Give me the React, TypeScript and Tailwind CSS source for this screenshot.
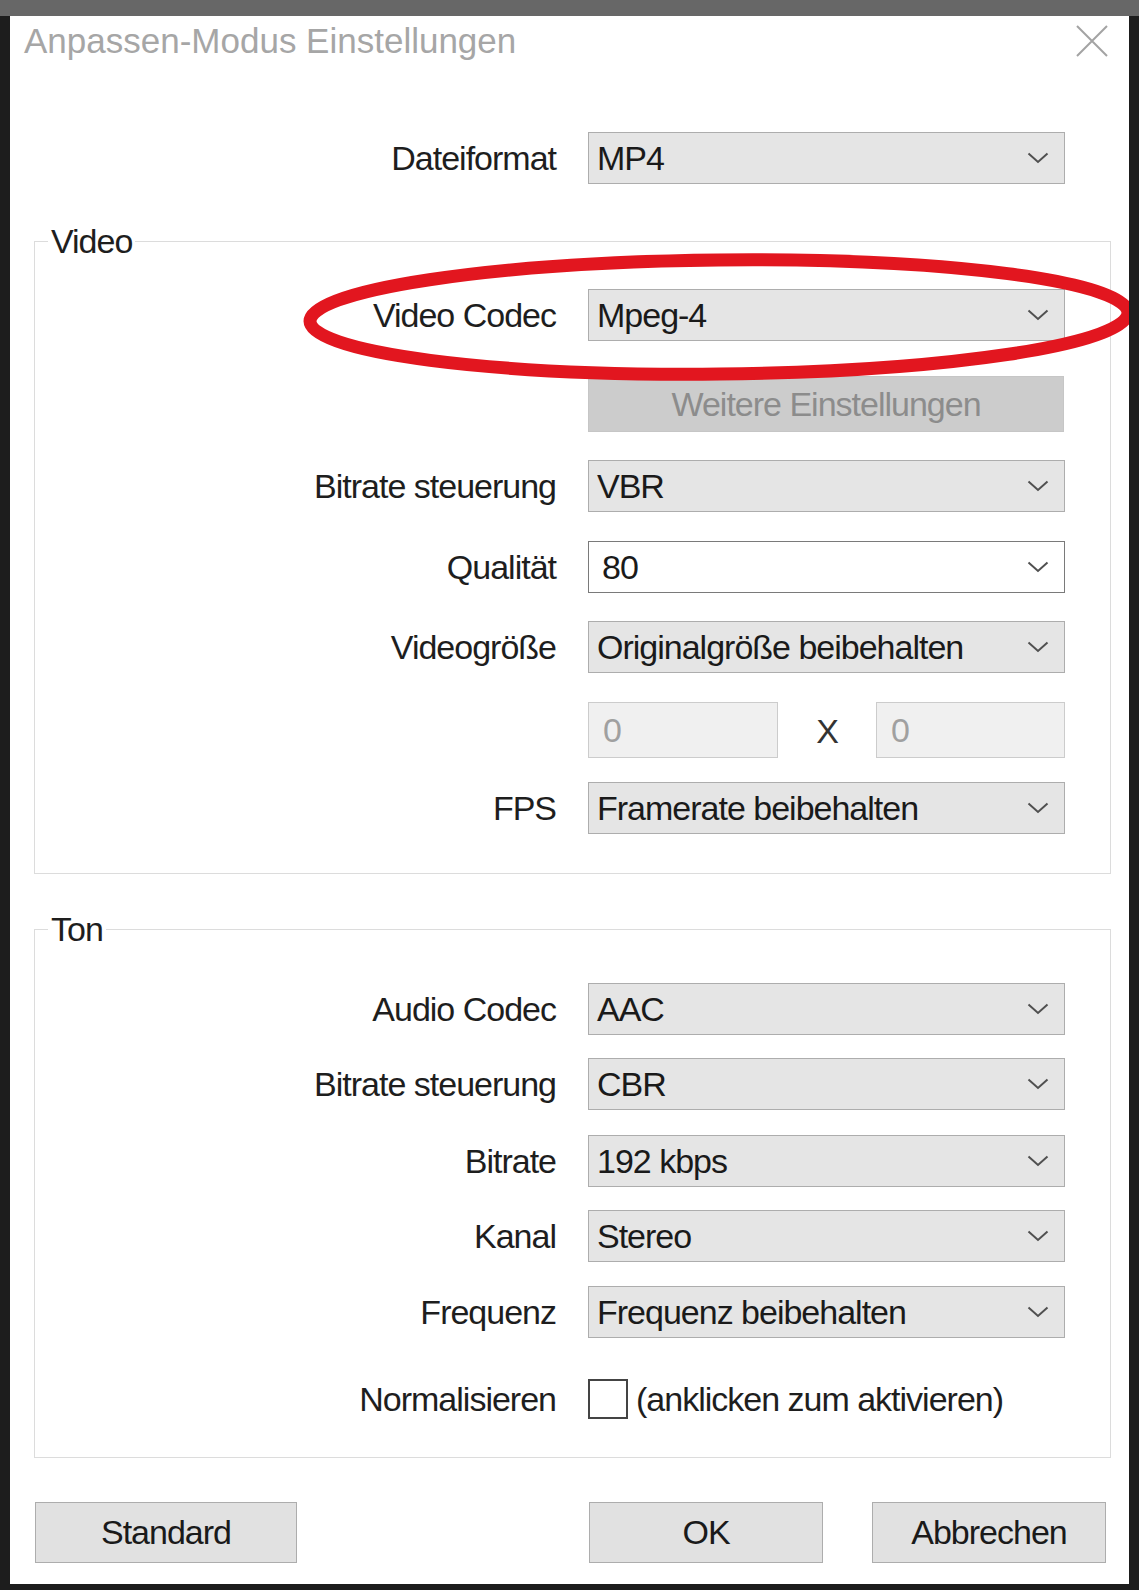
import React, { FC, ReactNode } from "react";

const Chevron: FC = () => (
  <svg width="22" height="12" viewBox="0 0 22 12" className="shrink-0">
    <path d="M1.5 1.5 L11 10 L20.5 1.5" fill="none" stroke="#505050" strokeWidth="2" />
  </svg>
);

const Select: FC<{ value: string; editable?: boolean }> = ({ value, editable }) => (
  <div
    className={
      editable
        ? "flex items-center h-[52px] w-[477px] border border-[#7a7a7a] bg-white pl-[13px] pr-[15px]"
        : "flex items-center h-[52px] w-[477px] border border-[#adadad] bg-[#e5e5e5] pl-[8px] pr-[15px]"
    }
  >
    <span className="flex-1 text-[#1a1a1a] whitespace-nowrap">{value}</span>
    <Chevron />
  </div>
);

const Row: FC<{
  label?: string;
  labelWidth: number;
  className?: string;
  children: ReactNode;
}> = ({ label, labelWidth, className, children }) => (
  <div className={"flex items-center " + (className ?? "")}>
    <div
      className="text-right text-[#1e1e1e] whitespace-nowrap shrink-0"
      style={{ width: labelWidth }}
    >
      {label}
    </div>
    <div className="ml-[32px]">{children}</div>
  </div>
);

const GroupBox: FC<{ title: string; className?: string; children: ReactNode }> = ({
  title,
  className,
  children,
}) => (
  <div className={"relative ml-[24px] w-[1077px] border border-[#dcdcdc] " + (className ?? "")}>
    <span className="absolute left-[13px] top-[-21px] h-[40px] leading-[40px] bg-white px-[3px] text-[#1e1e1e]">
      {title}
    </span>
    {children}
  </div>
);

const Button: FC<{ className?: string; children: ReactNode }> = ({ className, children }) => (
  <div
    className={
      "flex items-center justify-center h-[61px] border border-[#adadad] bg-[#e1e1e1] text-[#1a1a1a] " +
      (className ?? "")
    }
  >
    {children}
  </div>
);

const App: FC = () => {
  const inner = 521;

  return (
    <div className="w-[1139px] h-[1590px] bg-[#1d1d1d] flex flex-col font-['Liberation_Sans',Arial,sans-serif] text-[34px] tracking-[-1px]">
      <div className="h-[16px] shrink-0 bg-[#676767]" />
      <div className="flex-1 flex px-[10px] pb-[6px]">
        <div className="relative flex-1 flex flex-col bg-white overflow-hidden">
          {/* title bar */}
          <div className="h-[50px] flex items-center justify-between pl-[14px] pr-[21px]">
            <span className="text-[35px] tracking-normal text-[#a6a6a6]">
              Anpassen-Modus Einstellungen
            </span>
            <svg width="32" height="32" viewBox="0 0 32 32">
              <path d="M1 1 L31 31 M31 1 L1 31" stroke="#a3a3a3" strokeWidth="2" />
            </svg>
          </div>

          <Row label="Dateiformat" labelWidth={546} className="mt-[66px]">
            <Select value="MP4" />
          </Row>

          <GroupBox title="Video" className="mt-[57px] pt-[47px] pb-[39px]">
            <Row label="Video Codec" labelWidth={inner}>
              <Select value="Mpeg-4" />
            </Row>
            <Row labelWidth={inner} className="mt-[35px]">
              <div className="flex items-center justify-center h-[56px] w-[476px] bg-[#cccccc] border border-[#c6c6c6] text-[#8c8c8c] whitespace-nowrap">
                Weitere Einstellungen
              </div>
            </Row>
            <Row label="Bitrate steuerung" labelWidth={inner} className="mt-[28px]">
              <Select value="VBR" />
            </Row>
            <Row label="Qualität" labelWidth={inner} className="mt-[29px]">
              <Select value="80" editable />
            </Row>
            <Row label="Videogröße" labelWidth={inner} className="mt-[28px]">
              <Select value="Originalgröße beibehalten" />
            </Row>
            <Row labelWidth={inner} className="mt-[29px]">
              <div className="flex items-center w-[477px]">
                <div className="flex items-center h-[56px] w-[190px] border border-[#cccccc] bg-[#f0f0f0] pl-[14px] text-[#a0a0a0]">
                  0
                </div>
                <div className="flex-1 text-center text-[#333333] pt-[2px]">X</div>
                <div className="flex items-center h-[56px] w-[189px] border border-[#cccccc] bg-[#f0f0f0] pl-[14px] text-[#a0a0a0]">
                  0
                </div>
              </div>
            </Row>
            <Row label="FPS" labelWidth={inner} className="mt-[24px]">
              <Select value="Framerate beibehalten" />
            </Row>
          </GroupBox>

          <GroupBox title="Ton" className="mt-[55px] pt-[53px] pb-[38px]">
            <Row label="Audio Codec" labelWidth={inner}>
              <Select value="AAC" />
            </Row>
            <Row label="Bitrate steuerung" labelWidth={inner} className="mt-[23px]">
              <Select value="CBR" />
            </Row>
            <Row label="Bitrate" labelWidth={inner} className="mt-[25px]">
              <Select value="192 kbps" />
            </Row>
            <Row label="Kanal" labelWidth={inner} className="mt-[23px]">
              <Select value="Stereo" />
            </Row>
            <Row label="Frequenz" labelWidth={inner} className="mt-[24px]">
              <Select value="Frequenz beibehalten" />
            </Row>
            <Row label="Normalisieren" labelWidth={inner} className="mt-[41px] h-[40px]">
              <div className="flex items-center">
                <div className="w-[40px] h-[40px] border-2 border-[#444444] bg-white" />
                <span className="ml-[8px] text-[#1e1e1e] whitespace-nowrap">
                  (anklicken zum aktivieren)
                </span>
              </div>
            </Row>
          </GroupBox>

          <div className="flex mt-[44px]">
            <Button className="ml-[25px] w-[262px]">Standard</Button>
            <Button className="ml-[292px] w-[234px]">OK</Button>
            <Button className="ml-[49px] w-[234px]">Abbrechen</Button>
          </div>

          {/* red marker drawn over the Video Codec row */}
          <svg
            className="absolute left-0 top-0 pointer-events-none"
            width="1119"
            height="420"
            viewBox="0 0 1119 420"
          >
            <ellipse
              cx="709"
              cy="301"
              rx="409"
              ry="57"
              fill="none"
              stroke="#e2161f"
              strokeWidth="13"
              transform="rotate(-0.6 709 301)"
            />
          </svg>
        </div>
      </div>
    </div>
  );
};

export default App;
